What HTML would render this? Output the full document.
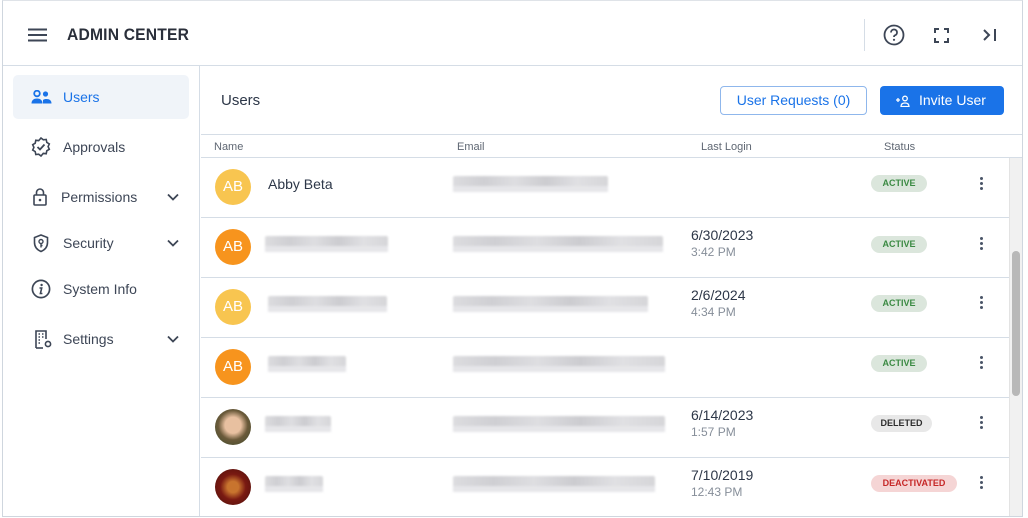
<!DOCTYPE html>
<html><head><meta charset="utf-8"><style>
*{box-sizing:border-box;margin:0;padding:0}
body{width:1028px;height:518px;background:#fff;font-family:"Liberation Sans",sans-serif;position:relative;overflow:hidden;color:#2d3748}
.frame{position:absolute;left:2px;top:0px;width:1021px;height:517px;border:1px solid #cfd6de;border-top-color:#dfe3e8;overflow:hidden}
.abs{position:absolute}
.hdr{left:0;top:0;width:1019px;height:65px;border-bottom:1px solid #d5dde6}
.side{left:0;top:65px;width:197px;height:452px;border-right:1px solid #d5dde6}
.nav{position:absolute;left:10px;width:176px;height:44px;display:flex;align-items:center;font-size:14px;color:#3d4656}
.nav svg{position:absolute;left:18px}
.nav span{position:absolute;left:50px}
.chev{position:absolute;left:154px!important}
.hl{background:#f0f4f9;border-radius:5px;color:#1a73e8}
.row{position:absolute;left:198px;width:808px;height:60px;border-bottom:1px solid #d5dde6}
.av{position:absolute;left:14px;top:11px;width:36px;height:36px;border-radius:50%;color:#fff;font-size:15px;text-align:center;line-height:36px}
.blur{position:absolute;height:14px;background:linear-gradient(90deg,#dcdcdf,#cfcfd3 20%,#dedee1 40%,#ccccd0 60%,#e0e0e3 80%,#d6d6d9);filter:blur(1px);border-radius:2px}
.blur:after{content:"";position:absolute;left:0;right:0;bottom:-2px;height:6px;background:#e6e6e9}
.date{position:absolute;left:490px;font-size:14px;color:#2d3748}
.time{position:absolute;left:490px;font-size:12px;color:#868e99}
.badge{position:absolute;height:17px;border-radius:9px;font-size:9px;font-weight:bold;text-align:center;line-height:17px}
.act{left:670px;width:56px;background:#dbe6dc;color:#3b8a43}
.kb{position:absolute;left:779px;width:3px}
.kb i{display:block;width:3px;height:3px;border-radius:50%;background:#4a5568;margin-bottom:2px}
</style></head><body>
<div class="frame">
 <div class="abs hdr">
  <svg class="abs" style="left:25px;top:27px" width="19" height="14"><path d="M0 1.5h19M0 7h19M0 12.5h19" stroke="#3d4656" stroke-width="2"/></svg>
  <div class="abs" style="left:64px;top:24px;font-size:17px;font-weight:bold;color:#2a2f3a;letter-spacing:0.2px;transform:scaleX(0.92);transform-origin:left">ADMIN CENTER</div>
  <div class="abs" style="left:861px;top:18px;width:1px;height:32px;background:#d5dde6"></div>
  <svg class="abs" style="left:880px;top:23px" width="22" height="22"><circle cx="11" cy="11" r="9.5" fill="none" stroke="#3d4656" stroke-width="1.8"/><path d="M8 8.5a3 3 0 1 1 4 2.8c-.8.3-1 .9-1 1.7" fill="none" stroke="#3d4656" stroke-width="1.8"/><circle cx="11" cy="15.8" r="1.1" fill="#3d4656"/></svg>
  <svg class="abs" style="left:931px;top:27px" width="15" height="15"><path d="M1 5V1h4M10 1h4v4M14 10v4h-4M5 14H1v-4" fill="none" stroke="#3d4656" stroke-width="2"/></svg>
  <svg class="abs" style="left:979px;top:27px" width="16" height="14"><path d="M2 2l5 5-5 5" fill="none" stroke="#3d4656" stroke-width="2"/><path d="M13 1v12" stroke="#3d4656" stroke-width="2"/></svg>
 </div>
 <div class="abs side">
  <div class="nav hl" style="top:9px"><svg width="21" height="14" viewBox="0 0 21 14"><circle cx="6" cy="3.5" r="2.8" fill="none" stroke="#1a73e8" stroke-width="1.8"/><path d="M0.5 13.5c0-3.5 2.5-5 5.5-5s5.5 1.5 5.5 5z" fill="#1a73e8"/><circle cx="14.5" cy="4" r="2.6" fill="#1a73e8"/><path d="M12 13.5h8.5c0-3-2-4.5-5-4.5-1.5 0-2.5.3-3.5 1z" fill="#1a73e8"/></svg><span>Users</span></div>
  <div class="nav" style="top:59px"><svg width="20" height="20" viewBox="0 0 20 20"><path d="M10 1l2.3 1.8 2.9-.3.6 2.9 2.5 1.5-1.2 2.7 1.2 2.7-2.5 1.5-.6 2.9-2.9-.3L10 19l-2.3-1.8-2.9.3-.6-2.9L1.7 13.1l1.2-2.7L1.7 7.7l2.5-1.5.6-2.9 2.9.3z" fill="none" stroke="#3d4656" stroke-width="1.6"/><path d="M6.5 10l2.5 2.5 4.5-5" fill="none" stroke="#3d4656" stroke-width="1.8"/></svg><span>Approvals</span></div>
  <div class="nav" style="top:109px"><svg width="14" height="18" viewBox="0 0 14 18" style="left:20px"><rect x="1" y="7" width="12" height="10" rx="1" fill="none" stroke="#3d4656" stroke-width="1.6"/><path d="M3.5 7V4.5a3.5 3.5 0 0 1 7 0V7" fill="none" stroke="#3d4656" stroke-width="1.6"/><circle cx="7" cy="12" r="1.3" fill="#3d4656"/></svg><span style="left:48px">Permissions</span><svg class="chev" width="12" height="8"><path d="M1 1.5l5 5 5-5" fill="none" stroke="#3d4656" stroke-width="1.8"/></svg></div>
  <div class="nav" style="top:155px"><svg width="16" height="19" viewBox="0 0 16 19" style="left:20px"><path d="M8 1l6.5 2.5v5c0 4.5-3 7.5-6.5 9-3.5-1.5-6.5-4.5-6.5-9v-5z" fill="none" stroke="#3d4656" stroke-width="1.6"/><circle cx="8" cy="7.5" r="2" fill="none" stroke="#3d4656" stroke-width="1.4"/><path d="M8 9.5v4M8 11.5h1.5" stroke="#3d4656" stroke-width="1.4"/></svg><span>Security</span><svg class="chev" width="12" height="8"><path d="M1 1.5l5 5 5-5" fill="none" stroke="#3d4656" stroke-width="1.8"/></svg></div>
  <div class="nav" style="top:201px"><svg width="20" height="20" viewBox="0 0 20 20"><circle cx="10" cy="10" r="8.6" fill="none" stroke="#3d4656" stroke-width="1.7"/><circle cx="10.6" cy="6" r="1.2" fill="#3d4656"/><path d="M8.5 9h2.2l-1.3 5.5h2" fill="none" stroke="#3d4656" stroke-width="1.6"/></svg><span>System Info</span></div>
  <div class="nav" style="top:251px"><svg width="18" height="19" viewBox="0 0 18 19" style="left:22px"><path d="M1 18V1h10v8" fill="none" stroke="#3d4656" stroke-width="1.6"/><path d="M1 18h7" stroke="#3d4656" stroke-width="1.6"/><path d="M3.5 4h1.5M7 4h1.5M3.5 7h1.5M7 7h1.5M3.5 10h1.5M3.5 13h1.5" stroke="#3d4656" stroke-width="1.4"/><circle cx="13" cy="14" r="2.6" fill="none" stroke="#3d4656" stroke-width="1.6"/></svg><span>Settings</span><svg class="chev" width="12" height="8"><path d="M1 1.5l5 5 5-5" fill="none" stroke="#3d4656" stroke-width="1.8"/></svg></div>
 </div>
 <div class="abs" style="left:198px;top:65px;width:821px;height:69px;border-bottom:1px solid #d5dde6">
  <div class="abs" style="left:20px;top:26px;font-size:15px;color:#2d3748">Users</div>
  <div class="abs" style="left:519px;top:20px;width:147px;height:29px;border:1px solid #8fb7ec;border-radius:4px;color:#1a73e8;font-size:14px;text-align:center;line-height:27px">User Requests (0)</div>
  <div class="abs" style="left:679px;top:20px;width:124px;height:29px;background:#1a73e8;border-radius:4px;color:#fff;font-size:14px;line-height:29px"><svg class="abs" style="left:16px;top:9px" width="14" height="12"><path d="M0 5h4M2 3v4" stroke="#fff" stroke-width="1.3"/><circle cx="9" cy="3.5" r="2.3" fill="none" stroke="#fff" stroke-width="1.3"/><path d="M5 11.5c0-2.5 1.8-3.5 4-3.5s4 1 4 3.5z" fill="none" stroke="#fff" stroke-width="1.3"/></svg><span style="position:absolute;left:39px">Invite User</span></div>
 </div>
 <div class="abs" style="left:198px;top:134px;width:821px;height:23px;border-bottom:1px solid #d5dde6;font-size:11px;color:#5f6773">
  <span class="abs" style="left:13px;top:6px">Name</span><span class="abs" style="left:256px;top:6px">Email</span><span class="abs" style="left:500px;top:6px">Last Login</span><span class="abs" style="left:683px;top:6px">Status</span>
 </div>
 <div class="abs" style="left:1006px;top:157px;width:13px;height:360px;background:#f1f1f1;border-left:1px solid #e3e3e3"></div>
 <div class="abs" style="left:1009px;top:250px;width:8px;height:145px;background:#b8b8b8;border-radius:4px"></div>

 <div class="row" style="top:157px">
  <div class="av" style="background:#f8c550">AB</div><div class="abs" style="left:67px;top:18px;font-size:14px;color:#2d3748">Abby Beta</div>
  <div class="blur" style="left:252px;top:18px;width:155px"></div>
  <div class="badge act" style="top:17px">ACTIVE</div><div class="kb" style="top:19px"><i></i><i></i><i></i></div>
 </div>
 <div class="row" style="top:217px">
  <div class="av" style="background:#f7941d">AB</div><div class="blur" style="left:64px;top:18px;width:123px"></div>
  <div class="blur" style="left:252px;top:18px;width:210px"></div>
  <div class="date" style="top:9px">6/30/2023</div><div class="time" style="top:27px">3:42 PM</div>
  <div class="badge act" style="top:18px">ACTIVE</div><div class="kb" style="top:19px"><i></i><i></i><i></i></div>
 </div>
 <div class="row" style="top:277px">
  <div class="av" style="background:#f8c550">AB</div><div class="blur" style="left:67px;top:18px;width:119px"></div>
  <div class="blur" style="left:252px;top:18px;width:195px"></div>
  <div class="date" style="top:9px">2/6/2024</div><div class="time" style="top:27px">4:34 PM</div>
  <div class="badge act" style="top:17px">ACTIVE</div><div class="kb" style="top:18px"><i></i><i></i><i></i></div>
 </div>
 <div class="row" style="top:337px">
  <div class="av" style="background:#f7941d">AB</div><div class="blur" style="left:67px;top:18px;width:78px"></div>
  <div class="blur" style="left:252px;top:18px;width:212px"></div>
  <div class="badge act" style="top:17px">ACTIVE</div><div class="kb" style="top:18px"><i></i><i></i><i></i></div>
 </div>
 <div class="row" style="top:397px">
  <div class="av" style="background:radial-gradient(circle at 50% 45%,#e8c0a0 0 30%,#6b5a3a 55%,#3a4a2a)"></div><div class="blur" style="left:64px;top:18px;width:66px"></div>
  <div class="blur" style="left:252px;top:18px;width:212px"></div>
  <div class="date" style="top:9px">6/14/2023</div><div class="time" style="top:27px">1:57 PM</div>
  <div class="badge" style="left:670px;top:17px;width:61px;background:#e8e8e8;color:#2d2d2d">DELETED</div><div class="kb" style="top:18px"><i></i><i></i><i></i></div>
 </div>
 <div class="row" style="top:457px">
  <div class="av" style="background:radial-gradient(circle at 50% 50%,#c8742e 0 22%,#7a1a12 50%,#4a0d0a)"></div><div class="blur" style="left:64px;top:18px;width:58px"></div>
  <div class="blur" style="left:252px;top:18px;width:202px"></div>
  <div class="date" style="top:9px">7/10/2019</div><div class="time" style="top:27px">12:43 PM</div>
  <div class="badge" style="left:670px;top:17px;width:86px;background:#f5d5d5;color:#c62828">DEACTIVATED</div><div class="kb" style="top:18px"><i></i><i></i><i></i></div>
 </div>
</div>
</body></html>
